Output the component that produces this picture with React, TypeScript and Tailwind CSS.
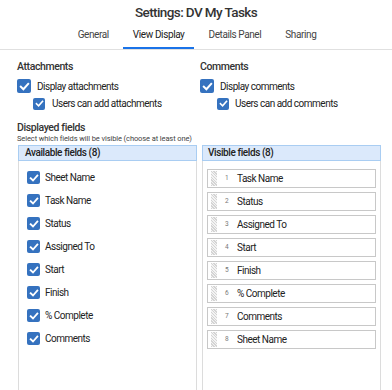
import React from 'react';

const TABS = ['General', 'View Display', 'Details Panel', 'Sharing'];
const FIELDS = ['Sheet Name', 'Task Name', 'Status', 'Assigned To', 'Start', 'Finish', '% Complete', 'Comments'];
const VISIBLE = ['Task Name', 'Status', 'Assigned To', 'Start', 'Finish', '% Complete', 'Comments', 'Sheet Name'];

function Box({ size = 14 }: { size?: number }) {
  return (
    <span
      className="flex shrink-0 items-center justify-center rounded-[2px] bg-[#3572bf]"
      style={{ width: size, height: size }}
    >
      <svg viewBox="0 0 12 12" width={size - 3} height={size - 3}>
        <path d="M2 6.3 L4.8 9 L10 3.2" fill="none" stroke="#fff" strokeWidth="2.2" strokeLinecap="square" />
      </svg>
    </span>
  );
}

function Check({ label, size = 14, gap = 'gap-[6px]' }: { label: string; size?: number; gap?: string }) {
  return (
    <div className={`flex items-center ${gap} text-[10px] leading-[13px] tracking-[-0.5px] text-[#222]`}>
      <Box size={size} />
      <span>{label}</span>
    </div>
  );
}

export default function App() {
  return (
    <div className="h-[390px] w-[392px] overflow-hidden bg-white font-['Roboto',sans-serif] text-[#333]">
      <div className="pt-[3px] text-center text-[13.5px] font-medium leading-[18px] tracking-[-0.6px] text-[#333]">
        Settings: DV My Tasks
      </div>

      <div className="mt-[3px] flex justify-center gap-[4px] border-b border-[#e0e0e0] pl-[2px]">
        {TABS.map((t) => (
          <div
            key={t}
            className={`px-[10px] pt-[4px] pb-[5px] text-[10px] leading-[14px] tracking-[-0.4px] ${
              t === 'View Display' ? 'border-b-2 border-[#1a73e8] text-[#222]' : 'border-b-2 border-transparent text-[#444]'
            }`}
          >
            {t}
          </div>
        ))}
      </div>

      <div className="mt-[10px] grid grid-cols-[183px_1fr] pl-[17px]">
        <div>
          <div className="text-[10.5px] font-medium leading-[14px] tracking-[-0.4px]">Attachments</div>
          <div className="mt-[5px]">
            <Check label="Display attachments" />
          </div>
          <div className="mt-[4px] pl-[16px]">
            <Check label="Users can add attachments" size={12} gap="gap-[7px]" />
          </div>
        </div>
        <div>
          <div className="text-[10.5px] font-medium leading-[14px] tracking-[-0.4px]">Comments</div>
          <div className="mt-[5px]">
            <Check label="Display comments" />
          </div>
          <div className="mt-[4px] pl-[17px]">
            <Check label="Users can add comments" size={12} gap="gap-[6px]" />
          </div>
        </div>
      </div>

      <div className="mt-[11px] pl-[17px]">
        <div className="text-[10.5px] font-medium leading-[13px] tracking-[-0.4px]">Displayed fields</div>
        <div className="text-[7.5px] leading-[10px] tracking-[-0.1px] text-[#444]">Select which fields will be visible (choose at least one)</div>
      </div>

      <div className="mt-[1px] ml-[18px] grid w-[363px] grid-cols-2 gap-[5px]">
        <div className="h-[260px] border-x border-[#dcdcdc]">
          <div className="-mx-px border border-[#a9cdf2] bg-[#dbe9fb] pl-[6px] text-[10px] font-medium leading-[14px] tracking-[-0.4px] text-[#222]">
            Available fields (8)
          </div>
          <div className="flex flex-col gap-[10px] pt-[10px] pl-[8px]">
            {FIELDS.map((f) => (
              <Check key={f} label={f} size={13} gap="gap-[5px]" />
            ))}
          </div>
        </div>

        <div className="h-[260px] border-x border-[#dcdcdc]">
          <div className="-mx-px border border-[#a9cdf2] bg-[#dbe9fb] pl-[5px] text-[10px] font-medium leading-[14px] tracking-[-0.4px] text-[#222]">
            Visible fields (8)
          </div>
          <div className="flex flex-col gap-[4px] px-[4px] pt-[8px]">
            {VISIBLE.map((f, i) => (
              <div key={f} className="flex h-[19px] items-center border border-[#c8c8c8] bg-white">
                <span className="ml-[3px] h-[15px] w-[6px] bg-[repeating-linear-gradient(45deg,#d4d4d4_0_1px,#f3f3f3_1px_2px)]" />
                <span className="ml-[8px] w-[12px] text-[6.5px] text-[#777]">{i + 1}</span>
                <span className="text-[10px] tracking-[-0.5px] text-[#222]">{f}</span>
              </div>
            ))}
          </div>
        </div>
      </div>
    </div>
  );
}
